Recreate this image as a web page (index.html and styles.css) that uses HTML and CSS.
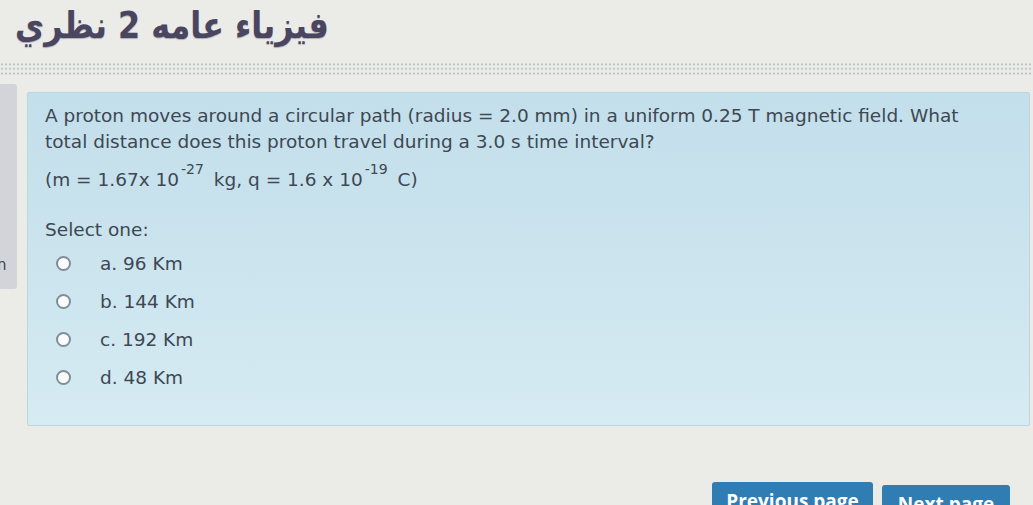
FILE: index.html
```html
<!DOCTYPE html>
<html lang="en">
<head>
<meta charset="utf-8">
<title>Quiz</title>
<link rel="stylesheet" href="styles.css">
</head>
<body>
<header class="page-head">
  <h1 class="course-title" dir="rtl">فيزياء عامه 2 نظري</h1>
</header>
<div class="dots"></div>
<main class="layout">
  <aside class="info"><span class="info-tail">n</span></aside>
  <section class="question">
    <p class="qtext">A proton moves around a circular path (radius = 2.0 mm) in a uniform 0.25 T magnetic field. What total distance does this proton travel during a 3.0 s time interval?</p>
    <p class="qdata">(m = 1.67x 10<sup>-27</sup> kg, q = 1.6 x 10<sup>-19</sup> C)</p>
    <p class="prompt">Select one:</p>
    <ul class="answers">
      <li class="answer"><span class="radio"></span><span class="label">a. 96 Km</span></li>
      <li class="answer"><span class="radio"></span><span class="label">b. 144 Km</span></li>
      <li class="answer"><span class="radio"></span><span class="label">c. 192 Km</span></li>
      <li class="answer"><span class="radio"></span><span class="label">d. 48 Km</span></li>
    </ul>
  </section>
</main>
<nav class="nav-buttons">
  <button class="btn btn-prev">Previous page</button>
  <button class="btn btn-next">Next page</button>
</nav>
</body>
</html>
```
FILE: styles.css
```css
html, body {
  margin: 0;
  padding: 0;
}
body {
  width: 1033px;
  height: 505px;
  overflow: hidden;
  background: #ebece8;
  font-family: "DejaVu Sans", Verdana, sans-serif;
}
.page-head {
  height: 58px;
  padding-left: 15px;
  display: flex;
  align-items: center;
}
.course-title {
  margin: -8px 0 0;
  font-family: "DejaVu Sans", sans-serif;
  font-weight: bold;
  font-size: 37px;
  color: #4a4560;
  text-shadow: 0 1px 1px rgba(0,0,0,0.25);
  line-height: 1;
  transform: scaleX(0.86);
  transform-origin: left center;
}
.dots {
  height: 14px;
  margin-top: 4px;
  background-image: radial-gradient(ellipse 0.8px 1.4px, #b6b9bd 70%, transparent 100%);
  background-size: 4px 4.6px;
}
.layout {
  display: flex;
  align-items: flex-start;
  margin-top: 8px;
}
.info {
  width: 17px;
  height: 205px;
  background: #d3d3da;
  border-radius: 0 3px 3px 0;
  position: relative;
  flex: none;
}
.info-tail {
  position: absolute;
  left: 0;
  bottom: 16px;
  font-size: 15px;
  color: #444;
  line-height: 1;
  margin-left: -3px;
}
.question {
  margin-left: 10px;
  margin-top: 8px;
  width: 984px;
  height: 322px;
  padding: 10px 0 0 17px;
  background: linear-gradient(180deg, #c3dfeb 0%, #cbe4ee 50%, #d6ebf2 100%);
  border: 1px solid #bcd5e0;
  border-radius: 2px;
  color: #3d4853;
  font-size: 18.5px;
}
.qtext {
  margin: 0;
  max-width: 935px;
  line-height: 26px;
}
.qdata {
  margin: 12px 0 0;
  line-height: 26px;
}
.qdata sup {
  font-size: 14px;
  vertical-align: 12px;
  line-height: 0;
  margin: 0 4px 0 2px;
}
.prompt {
  margin: 24px 0 0;
  line-height: 26px;
}
.answers {
  list-style: none;
  margin: 1px 0 0;
  padding: 0;
}
.answer {
  display: flex;
  align-items: center;
  height: 38px;
}
.radio {
  width: 11px;
  height: 11px;
  border: 2px solid #7f8e99;
  border-radius: 50%;
  background: #fbfcfc;
  margin-left: 11px;
  flex: none;
}
.label {
  margin-left: 29px;
}
.nav-buttons {
  display: flex;
  align-items: flex-start;
  gap: 9px;
  margin-top: 56px;
  padding-left: 712px;
}
.btn {
  height: 40px;
  border: none;
  border-radius: 3px;
  background: #2f7db3;
  color: #ffffff;
  font-family: "Open Sans", sans-serif;
  font-weight: bold;
  font-size: 19px;
  padding: 0 10px;
  line-height: 38px;
  margin: 0;
  display: flex;
  align-items: flex-start;
  justify-content: center;
}
.btn-prev {
  width: 161px;
}
.btn-next {
  width: 128px;
  margin-top: 3px;
}
```
